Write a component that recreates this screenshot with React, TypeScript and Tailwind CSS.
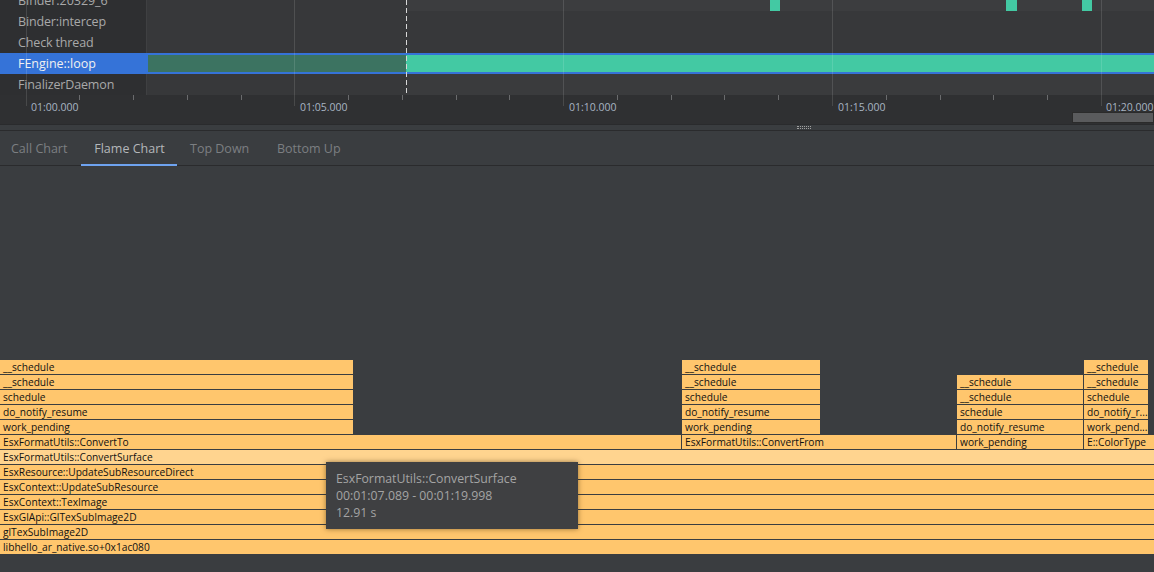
import React from "react";

const font = { fontFamily: '"Open Sans", "Noto Sans", sans-serif' };

type Seg = { w: number; label?: string; gap?: boolean };

const gap = (w: number): Seg => ({ w, gap: true });

const stacks: Seg[][] = [
  [{ w: 353, label: "__schedule" }, gap(329), { w: 138, label: "__schedule" }, gap(264), { w: 64, label: "__schedule" }],
  [{ w: 353, label: "__schedule" }, gap(329), { w: 138, label: "__schedule" }, gap(137), { w: 127, label: "__schedule" }, { w: 64, label: "__schedule" }],
  [{ w: 353, label: "schedule" }, gap(329), { w: 138, label: "schedule" }, gap(137), { w: 127, label: "__schedule" }, { w: 64, label: "schedule" }],
  [{ w: 353, label: "do_notify_resume" }, gap(329), { w: 138, label: "do_notify_resume" }, gap(137), { w: 127, label: "schedule" }, { w: 64, label: "do_notify_r..." }],
  [{ w: 353, label: "work_pending" }, gap(329), { w: 138, label: "work_pending" }, gap(137), { w: 127, label: "do_notify_resume" }, { w: 64, label: "work_pend..." }],
  [{ w: 682, label: "EsxFormatUtils::ConvertTo" }, { w: 275, label: "EsxFormatUtils::ConvertFrom" }, { w: 127, label: "work_pending" }, { w: 70, label: "E::ColorType" }],
];

const fullRows = [
  "EsxResource::UpdateSubResourceDirect",
  "EsxContext::UpdateSubResource",
  "EsxContext::TexImage",
  "EsxGlApi::GlTexSubImage2D",
  "glTexSubImage2D",
  "libhello_ar_native.so+0x1ac080",
];

const majors = [26, 294, 563, 832, 1101];
const minors = [79, 133, 187, 241, 348, 402, 456, 509, 617, 671, 724, 778, 886, 940, 993, 1047];
const labels = [
  { x: 31, t: "01:00.000" },
  { x: 300, t: "01:05.000" },
  { x: 569, t: "01:10.000" },
  { x: 838, t: "01:15.000" },
  { x: 1106, t: "01:20.000" },
];

function ThreadLabel({ text, selected }: { text: string; selected?: boolean }) {
  return (
    <div
      className={
        selected
          ? "w-[147px] shrink-0 h-full pl-[18px] pt-[2px] flex items-center bg-[#3573d8] text-[#f0f0f0] text-[12.5px] tracking-[-0.02px]"
          : "w-[147px] shrink-0 h-full pl-[18px] pt-[2px] flex items-center bg-[#2e2f31] border-r border-[#3f4042] text-[#a9a9a9] text-[12.5px] tracking-[-0.14px]"
      }
    >
      {text}
    </div>
  );
}

function FlameBar({ seg, divider }: { seg: Seg; divider: boolean }) {
  if (seg.gap) return <div style={{ width: seg.w }} className="shrink-0" />;
  return (
    <div
      style={{ width: seg.w }}
      className={
        divider
          ? "shrink-0 h-[14px] bg-[#ffc66d] pl-[3px] text-[10.2px] leading-[14px] text-[#111] overflow-hidden whitespace-nowrap border-r border-[#3a3d40]"
          : "shrink-0 h-[14px] bg-[#ffc66d] pl-[3px] text-[10.2px] leading-[14px] text-[#111] overflow-hidden whitespace-nowrap"
      }
    >
      {seg.label}
    </div>
  );
}

export default function App() {
  return (
    <div style={font} className="relative w-[1154px] h-[572px] overflow-hidden bg-[#3a3d40] flex flex-col">
      {/* Timeline */}
      <div className="relative h-[124px] shrink-0 bg-[#2f3032]">
        <div className="h-[11px] flex overflow-hidden">
          <div className="w-[147px] shrink-0 h-full pl-[18px] flex items-end bg-[#2e2f31] border-r border-[#3f4042] text-[#a9a9a9] text-[12.5px] tracking-[-0.05px] leading-[21px]">
            <span className="block whitespace-nowrap">Binder:20329_6</span>
          </div>
          <div className="w-[259px] shrink-0 bg-[#37383a]" />
          <div className="flex-1 bg-[#3c3d3f] flex">
            <div className="w-[364px] shrink-0" />
            <div className="w-[10px] shrink-0 bg-[#43c9a3]" />
            <div className="w-[226px] shrink-0" />
            <div className="w-[11px] shrink-0 bg-[#43c9a3]" />
            <div className="w-[65px] shrink-0" />
            <div className="w-[10px] shrink-0 bg-[#43c9a3]" />
          </div>
        </div>
        <div className="h-[21px] flex">
          <ThreadLabel text="Binder:intercep" />
          <div className="flex-1 bg-[#37383a]" />
        </div>
        <div className="h-[21px] flex">
          <ThreadLabel text="Check thread" />
          <div className="flex-1 bg-[#37383a]" />
        </div>
        <div className="h-[21px] flex">
          <ThreadLabel text="FEngine::loop" selected />
          <div className="flex-1 flex border-y-2 border-[#3573d8] pl-px bg-[#3573d8]">
            <div className="w-[258px] shrink-0 bg-[#3c7361]" />
            <div className="flex-1 bg-[#43c9a3]" />
          </div>
        </div>
        <div className="h-[21px] flex">
          <ThreadLabel text="FinalizerDaemon" />
          <div className="w-[259px] shrink-0 bg-[#37383a]" />
          <div className="flex-1 bg-[#3a3b3d]" />
        </div>
        {/* Ruler */}
        <div className="relative h-[29px] bg-[#2f3032]">
          {minors.map((x) => (
            <div key={x} style={{ left: x }} className="absolute top-0 w-px h-[5px] bg-[#6a6b6d]" />
          ))}
          {labels.map((l) => (
            <span key={l.x} style={{ left: l.x }} className="absolute top-[5px] text-[10.5px] leading-[14px] text-[#a8b4c2] whitespace-nowrap">
              {l.t}
            </span>
          ))}
          <div className="absolute left-[1072px] right-0 top-[17px] h-[11px] bg-[#5a5b5d] border border-[#2b2b2b]" />
        </div>
        {/* Major grid lines */}
        {majors.map((x) => (
          <div key={x} style={{ left: x }} className="absolute top-0 h-[106px] w-px bg-[#ffffff1f]" />
        ))}
        {/* Playhead */}
        <div className="absolute left-[406px] top-0 h-[95px] w-px bg-[repeating-linear-gradient(to_bottom,#d8d8d8_0,#d8d8d8_5px,transparent_5px,transparent_8px)]" />
      </div>

      {/* Splitter */}
      <div className="relative h-[7px] shrink-0 bg-[#3a3d40] border-y border-[#2a2b2d]">
        <div className="absolute left-[797px] top-[1px] w-[14px] h-[3px] border-y border-dotted border-[#a0a0a0]" />
      </div>

      {/* Tabs */}
      <div className="h-[35px] shrink-0 flex items-stretch border-b border-[#2a2b2d] text-[12.5px] text-[#7c7f82]">
        <div className="w-[81px] pl-[11px] pt-[3px] flex items-center">Call Chart</div>
        <div className="w-[96px] pt-[3px] pl-px flex items-center justify-center text-[#b4b7ba] border-b-2 border-[#6ea3f0] -mb-px">Flame Chart</div>
        <div className="ml-[13px] w-[87px] pt-[3px] flex items-center">Top Down</div>
        <div className="pt-[3px] flex items-center">Bottom Up</div>
      </div>

      {/* Flame chart */}
      <div className="flex-1 flex flex-col pt-[194px] gap-px">
        {stacks.map((row, i) => (
          <div key={i} className="flex h-[14px] w-[1154px]">
            {row.map((s, j) => {
              const next = row[j + 1];
              return <FlameBar key={j} seg={s} divider={!!next && !next.gap} />;
            })}
          </div>
        ))}
        <div className="h-[14px] bg-[#ffd48f] pl-[3px] text-[10.2px] leading-[14px] text-[#111]">EsxFormatUtils::ConvertSurface</div>
        {fullRows.map((t) => (
          <div key={t} className="h-[14px] bg-[#ffc66d] pl-[3px] text-[10.2px] leading-[14px] text-[#111]">
            {t}
          </div>
        ))}
      </div>

      {/* Tooltip */}
      <div className="absolute left-[326px] top-[462px] w-[252px] h-[67px] bg-[#3f4042] shadow-[0_0_5px_rgba(60,40,10,0.55)] pl-[10px] pt-[8px] text-[12.3px] leading-[17px] text-[#a4a4a4]">
        <div>EsxFormatUtils::ConvertSurface</div>
        <div>00:01:07.089 - 00:01:19.998</div>
        <div>12.91 s</div>
      </div>
    </div>
  );
}
